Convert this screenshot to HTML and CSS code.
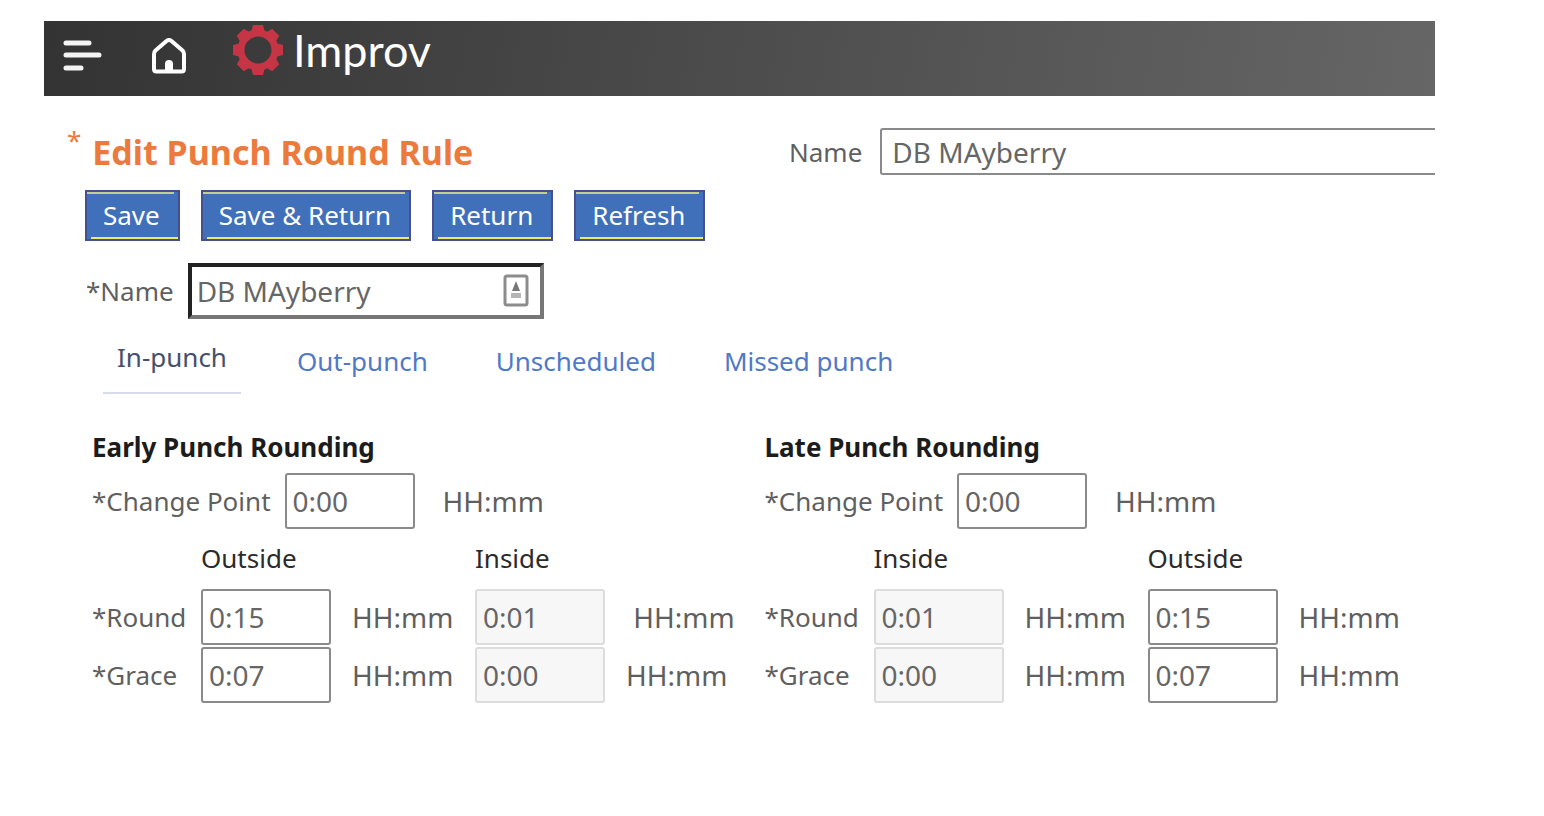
FILE: index.html
```html
<!DOCTYPE html>
<html lang="en">
<head>
    <meta charset="UTF-8">
    <meta name="viewport" content="width=device-width, initial-scale=1.0">
    <title>Edit Punch Round Rule</title>
    <link rel="stylesheet" href="styles.css">
</head>
<body>
    <header class="topbar">
        <button type="button" class="icon-button" aria-label="Menu">
            <svg width="40" height="36" viewBox="0 0 40 36" stroke="#f4f4f4" stroke-width="5" stroke-linecap="round">
                <path d="M4 5H27M4 17H37M4 30H19"/>
            </svg>
        </button>
        <a href="#" class="icon-button home" aria-label="Home">
            <svg width="36" height="36" viewBox="0 0 36 36" fill="none" stroke="#fff" stroke-width="4" stroke-linejoin="round">
                <path d="M3 16Q3 14 4.500 12.500L15.500 3Q18 1 20.500 3L31.500 12.500Q33 14 33 16V31Q33 33.500 30.500 33.500H5.500Q3 33.500 3 31Z"/>
                <path d="M14 33V26Q14 22 18 22T22 26V33Z" fill="#fff" stroke="none"/>
            </svg>
        </a>
        <a href="#" class="logo">
            <svg width="50" height="50" viewBox="-25 -25 50 50" fill="#c63545">
                <g id="teeth">
                    <path id="tooth" d="M-7 -17L-5 -25H5L7 -17ZM-7 17L-5 25H5L7 17Z"/>
                    <use href="#tooth" transform="rotate(45)"/>
                    <use href="#tooth" transform="rotate(90)"/>
                    <use href="#tooth" transform="rotate(135)"/>
                </g>
                <circle r="17" fill="none" stroke="#c63545" stroke-width="7"/>
            </svg>
            <span>Improv</span>
        </a>
    </header>

    <form class="page">
        <div class="title-row">
            <h1><span class="star">*</span>Edit Punch Round Rule</h1>
            <div class="lookup">
                <label for="lookup">Name</label>
                <input type="text" id="lookup" value="DB MAyberry">
            </div>
        </div>

        <div class="actions">
            <button type="button">Save</button>
            <button type="button">Save &amp; Return</button>
            <button type="button">Return</button>
            <button type="button">Refresh</button>
        </div>

        <div class="name-row">
            <label for="name">*Name</label>
            <div class="name-box">
                <input type="text" id="name" value="DB MAyberry">
                <svg class="card-icon" width="26" height="34" viewBox="0 0 26 34">
                    <rect x="2" y="2" width="22" height="29" rx="2" fill="#fff" stroke="#8c8c8c" stroke-width="3"/>
                    <path d="M13 7L17 17H9Z" fill="#777"/>
                    <path d="M8 19H18V24H8Z" fill="#b5b5b5"/>
                </svg>
            </div>
        </div>

        <nav class="tabs">
            <a href="#" class="active">In-punch</a>
            <a href="#">Out-punch</a>
            <a href="#">Unscheduled</a>
            <a href="#">Missed punch</a>
        </nav>

        <div class="panels">
            <section>
                <h2>Early Punch Rounding</h2>
                <div class="change-point">
                    <label for="early-change">*Change Point</label>
                    <input type="text" id="early-change" class="time" value="0:00">
                    <span class="unit">HH:mm</span>
                </div>
                <div class="row heads">
                    <span></span>
                    <span>Outside</span>
                    <span>Inside</span>
                </div>
                <div class="row">
                    <label for="early-round">*Round</label>
                    <div class="cell"><input type="text" id="early-round" class="time" value="0:15"><span class="unit">HH:mm</span></div>
                    <div class="cell"><input type="text" class="time" value="0:01" aria-label="Round inside" disabled><span class="unit">&nbsp;HH:mm</span></div>
                </div>
                <div class="row">
                    <label for="early-grace">*Grace</label>
                    <div class="cell"><input type="text" id="early-grace" class="time" value="0:07"><span class="unit">HH:mm</span></div>
                    <div class="cell"><input type="text" class="time" value="0:00" aria-label="Grace inside" disabled><span class="unit">HH:mm</span></div>
                </div>
            </section>

            <section>
                <h2>Late Punch Rounding</h2>
                <div class="change-point">
                    <label for="late-change">*Change Point</label>
                    <input type="text" id="late-change" class="time" value="0:00">
                    <span class="unit">HH:mm</span>
                </div>
                <div class="row heads">
                    <span></span>
                    <span>Inside</span>
                    <span>Outside</span>
                </div>
                <div class="row">
                    <label for="late-round">*Round</label>
                    <div class="cell"><input type="text" class="time" value="0:01" aria-label="Round inside" disabled><span class="unit">HH:mm</span></div>
                    <div class="cell"><input type="text" id="late-round" class="time" value="0:15"><span class="unit">HH:mm</span></div>
                </div>
                <div class="row">
                    <label for="late-grace">*Grace</label>
                    <div class="cell"><input type="text" class="time" value="0:00" aria-label="Grace inside" disabled><span class="unit">HH:mm</span></div>
                    <div class="cell"><input type="text" id="late-grace" class="time" value="0:07"><span class="unit">HH:mm</span></div>
                </div>
            </section>
        </div>
    </form>
</body>
</html>
```
FILE: styles.css
```css
* {
    box-sizing: border-box;
}
body {
    margin: 0;
    padding: 21px 109px 0 44px;
    background: #fff;
    color: #5f5f5f;
    font-family: "Noto Sans", sans-serif;
    font-size: 26px;
    line-height: 32px;
}
a {
    text-decoration: none;
}
input {
    font-family: inherit;
    font-size: 28px;
    color: #666;
    background: #fff;
    border: 2px solid #8a8a8a;
    border-radius: 3px;
}

/* top bar */
.topbar {
    display: flex;
    align-items: center;
    height: 75px;
    padding: 0 0 6px 18px;
    background: linear-gradient(100deg, #333, #666);
}
.icon-button {
    display: flex;
    padding: 0;
    border: none;
    background: none;
    cursor: pointer;
}
.topbar .home {
    margin: 0 46px 0 49px;
}
.logo {
    display: flex;
    align-items: center;
    gap: 10px;
    padding-bottom: 12px;
    color: #fff;
    font-family: Lato, sans-serif;
    font-size: 45px;
    line-height: 50px;
}

/* title and lookup */
.title-row {
    display: grid;
    grid-template-columns: 745px 1fr;
    align-items: center;
    margin-top: 32px;
}
h1 {
    display: flex;
    gap: 11px;
    margin: 0;
    padding-left: 23px;
    color: #ec7a3c;
    font-size: 34px;
    line-height: 46px;
}
.star {
    font-size: 26px;
    line-height: 22px;
    font-weight: normal;
}
.lookup {
    display: flex;
    align-items: center;
    gap: 18px;
}
.lookup input {
    flex: 1;
    min-width: 0;
    height: 47px;
    padding: 0 10px;
    border-right: none;
    border-radius: 3px 0 0 3px;
}

/* buttons */
.actions {
    display: flex;
    gap: 21px;
    margin: 15px 0 22px;
    padding-left: 41px;
}
.actions button {
    height: 51px;
    padding: 0 18px 2px 16px;
    border: 2px solid #47508f;
    background:
        linear-gradient(#c3cf8e, #c3cf8e) 0 0 / calc(100% - 4px) 2px no-repeat,
        linear-gradient(#e9ea6b, #e9ea6b) 4px 100% / 100% 2px no-repeat,
        #4170bb;
    color: #fff;
    font-family: inherit;
    font-size: 26px;
    cursor: pointer;
}

/* rule name */
.name-row {
    display: flex;
    align-items: center;
    gap: 14px;
    padding-left: 42px;
}
.name-box {
    position: relative;
}
.name-box input {
    display: block;
    width: 356px;
    height: 56px;
    padding: 0 5px;
    border: 4px solid;
    border-color: #222 #777 #777 #222;
    border-radius: 0;
}
.card-icon {
    position: absolute;
    top: 11px;
    right: 15px;
}

/* tabs */
.tabs {
    display: flex;
    margin-top: 18px;
    padding-left: 59px;
}
.tabs a {
    padding: 8px 34px;
    color: #5079c6;
}
.tabs .active {
    margin-right: 22px;
    padding: 4px 14px 19px;
    border-bottom: 2px solid #d8dcee;
    color: #45506b;
}

/* rounding panels */
.panels {
    display: grid;
    grid-template-columns: 1fr 1fr;
    gap: 2px;
    margin-top: 35px;
    padding-left: 48px;
}
h2 {
    margin: 0;
    color: #1c1c1c;
    font-size: 26px;
    line-height: 36px;
}
.change-point {
    display: flex;
    align-items: center;
    margin-top: 8px;
}
.change-point label {
    margin-right: 14px;
}
.change-point .unit {
    margin-left: 28px;
}
.time {
    width: 130px;
    height: 56px;
    padding: 0 6px;
}
.time:disabled {
    background: #f7f7f7;
    border-color: #dcdcdc;
}
.row {
    display: grid;
    grid-template-columns: 109px 274px 274px;
    align-items: center;
    margin-bottom: 2px;
}
.heads {
    margin: 13px 0 15px;
    color: #2b2b2b;
}
.cell {
    display: flex;
    align-items: center;
    gap: 21px;
}
.unit {
    font-size: 28px;
}
```
